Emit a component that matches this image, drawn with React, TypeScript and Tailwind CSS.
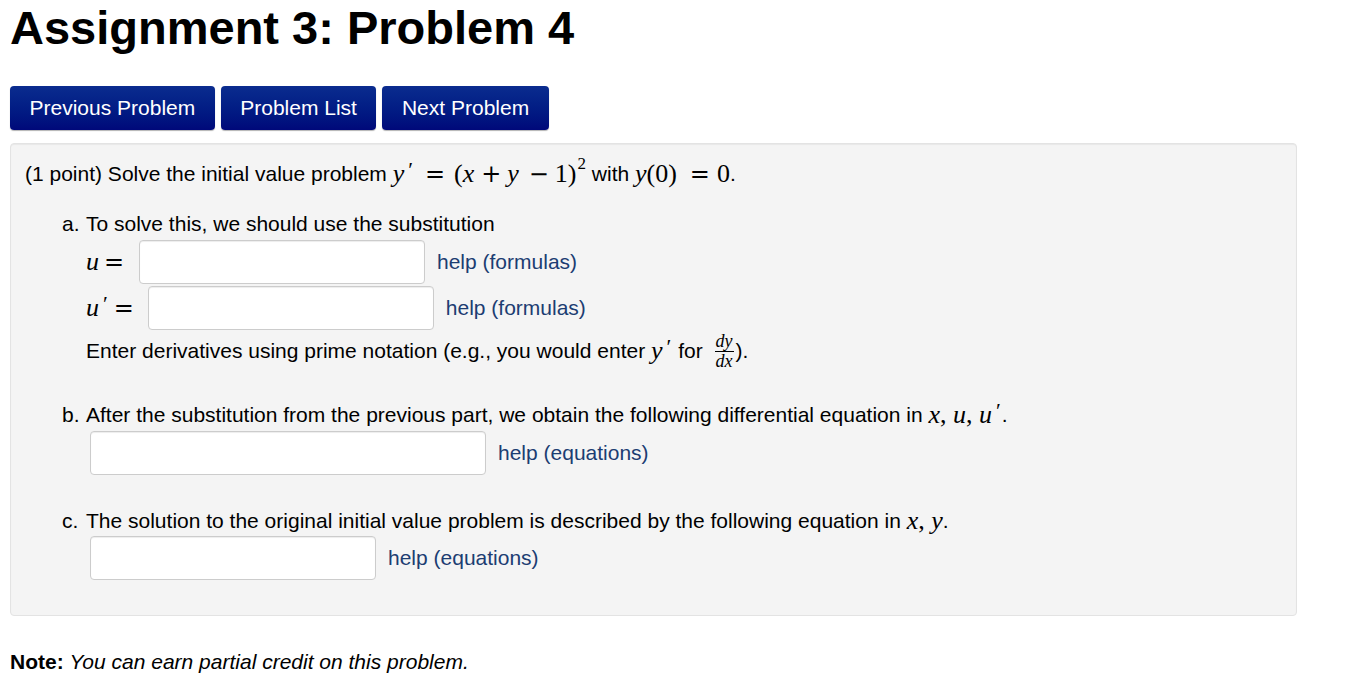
import React from 'react';

const mathFont = { fontFamily: '"Liberation Serif", "Times New Roman", serif' };
const opFont = { fontFamily: '"DejaVu Serif", "Liberation Serif", serif' };

function M({ children }: { children: React.ReactNode }) {
  return (
    <span className="italic text-[26px] leading-[30px]" style={mathFont}>
      {children}
    </span>
  );
}

function R({ children }: { children: React.ReactNode }) {
  return (
    <span className="not-italic text-[26px] leading-[30px]" style={mathFont}>
      {children}
    </span>
  );
}

// operator with TeX-like spacing around it
function Op({ children, gap = 'mx-[6px]' }: { children: React.ReactNode; gap?: string }) {
  return (
    <span
      className={`not-italic text-[24px] leading-[30px] inline-flex justify-center w-[18px] ${gap}`}
      style={opFont}
    >
      {children}
    </span>
  );
}

function Prime() {
  return (
    <span className="not-italic text-[22px] relative -top-[5px] ml-[4px] mr-[1px]" style={mathFont}>
      ′
    </span>
  );
}

function Help({ label }: { label: string }) {
  return <a className="text-[#1c3d72] ml-[12px] cursor-pointer">{label}</a>;
}

function AnswerBox({ width }: { width: string }) {
  return (
    <input
      type="text"
      className={`${width} h-[44px] bg-white border border-[#cccccc] rounded-[4px] shadow-[inset_0_1px_1px_rgba(0,0,0,0.075)] px-2 focus:outline-none`}
    />
  );
}

export default function App() {
  return (
    <div
      className="min-h-screen bg-white px-[10px] text-[21px] text-black"
      style={{ fontFamily: '"Liberation Sans", Arial, sans-serif' }}
    >
      <h1 className="text-[47px] font-bold leading-[52px] pt-[2px]">Assignment 3: Problem 4</h1>

      <div className="flex gap-[6px] mt-[32px]">
        {['Previous Problem', 'Problem List', 'Next Problem'].map((b) => (
          <button
            key={b}
            className="h-[44px] px-[19.5px] rounded-[4px] text-white bg-gradient-to-b from-[#0b2c8f] to-[#00087a] shadow-[0_1px_1px_rgba(0,0,0,0.3)]"
          >
            {b}
          </button>
        ))}
      </div>

      <div className="mt-[13px] w-[1287px] bg-[#f4f4f4] border border-[#e3e3e3] rounded-[4px] pl-[14px] pt-[15px] pb-[35px] shadow-[inset_0_1px_1px_rgba(0,0,0,0.05)]">
        <div className="h-[30px] flex items-center whitespace-nowrap">
          <span>(1 point) Solve the initial value problem&nbsp;</span>
          <M>y</M>
          <Prime />
          <Op gap="ml-[12px] mr-[10px]">=</Op>
          <R>(</R>
          <M>x</M>
          <Op gap="ml-[8px] mr-[7px]">+</Op>
          <M>y</M>
          <Op gap="ml-[11px] mr-[7px]">−</Op>
          <R>1)</R>
          <span className="text-[17px] relative -top-[10px] ml-[1px]" style={mathFont}>2</span>
          <span>&nbsp;with&nbsp;</span>
          <M>y</M>
          <R>(0)</R>
          <Op gap="ml-[14px] mr-[8px]">=</Op>
          <R>0</R>
          <span>.</span>
        </div>

        <div className="pl-[37px] mt-[20px]">
          <div className="flex">
            <div className="w-[24px] h-[30px] flex items-center">a.</div>
            <div>
              <div className="h-[30px] flex items-center">To solve this, we should use the substitution</div>
              <div className="flex items-center mt-[1px]">
                <M>u</M>
                <Op gap="ml-[6px] mr-[16px]">=</Op>
                <AnswerBox width="w-[286px]" />
                <Help label="help (formulas)" />
              </div>
              <div className="flex items-center mt-[2px]">
                <M>u</M>
                <Prime />
                <Op gap="ml-[6px] mr-[15px]">=</Op>
                <AnswerBox width="w-[286px]" />
                <Help label="help (formulas)" />
              </div>
              <div className="h-[42px] flex items-center whitespace-nowrap">
                <span>Enter derivatives using prime notation (e.g., you would enter&nbsp;</span>
                <M>y</M>
                <Prime />
                <span>&nbsp;for&nbsp;</span>
                <span
                  className="inline-flex flex-col items-center italic text-[18px] leading-[19px] ml-[6px] mr-[2px]"
                  style={mathFont}
                >
                  <span className="px-[1px]">dy</span>
                  <span className="border-t border-black px-[1px]">dx</span>
                </span>
                <span>).</span>
              </div>
            </div>
          </div>

          <div className="flex mt-[28px]">
            <div className="w-[24px] h-[30px] flex items-center">b.</div>
            <div>
              <div className="h-[30px] flex items-center whitespace-nowrap">
                <span>After the substitution from the previous part, we obtain the following differential equation in&nbsp;</span>
                <M>x</M>
                <R>,&nbsp;</R>
                <M>u</M>
                <R>,&nbsp;</R>
                <M>u</M>
                <Prime />
                <span>.</span>
              </div>
              <div className="flex items-center ml-[4px] mt-[1px]">
                <AnswerBox width="w-[396px]" />
                <Help label="help (equations)" />
              </div>
            </div>
          </div>

          <div className="flex mt-[31px]">
            <div className="w-[24px] h-[30px] flex items-center">c.</div>
            <div>
              <div className="h-[30px] flex items-center whitespace-nowrap">
                <span>The solution to the original initial value problem is described by the following equation in&nbsp;</span>
                <M>x</M>
                <R>,&nbsp;</R>
                <M>y</M>
                <span>.</span>
              </div>
              <div className="flex items-center ml-[4px]">
                <AnswerBox width="w-[286px]" />
                <Help label="help (equations)" />
              </div>
            </div>
          </div>
        </div>
      </div>

      <div className="mt-[31px] h-[30px] flex items-center">
        <span className="font-bold">Note:</span>
        <span className="italic">&nbsp;You can earn partial credit on this problem.</span>
      </div>
    </div>
  );
}
